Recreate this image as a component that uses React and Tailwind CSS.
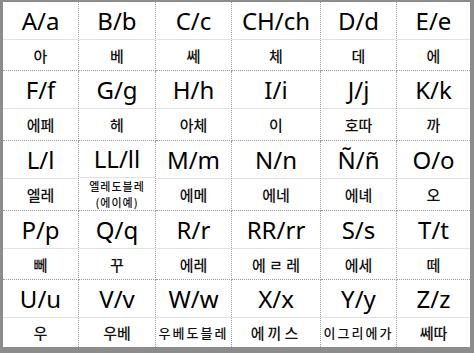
import React from 'react';

const rows = [
  [
    { l: 'A/a', k: '아' },
    { l: 'B/b', k: '베' },
    { l: 'C/c', k: '쎄' },
    { l: 'CH/ch', k: '체' },
    { l: 'D/d', k: '데' },
    { l: 'E/e', k: '에' },
  ],
  [
    { l: 'F/f', k: '에페' },
    { l: 'G/g', k: '헤' },
    { l: 'H/h', k: '아체' },
    { l: 'I/i', k: '이' },
    { l: 'J/j', k: '호따' },
    { l: 'K/k', k: '까' },
  ],
  [
    { l: 'L/l', k: '엘레' },
    { l: 'LL/ll', k: '엘레도블레', k2: '(에이예)' },
    { l: 'M/m', k: '에메' },
    { l: 'N/n', k: '에네' },
    { l: 'Ñ/ñ', k: '에녜' },
    { l: 'O/o', k: '오' },
  ],
  [
    { l: 'P/p', k: '뻬' },
    { l: 'Q/q', k: '꾸' },
    { l: 'R/r', k: '에레' },
    { l: 'RR/rr', k: '에 ㄹ 레' },
    { l: 'S/s', k: '에세' },
    { l: 'T/t', k: '떼' },
  ],
  [
    { l: 'U/u', k: '우' },
    { l: 'V/v', k: '우베' },
    { l: 'W/w', k: '우베도블레', small: true },
    { l: 'X/x', k: '에끼스', wide: true },
    { l: 'Y/y', k: '이그리에가', small: true },
    { l: 'Z/z', k: '쎄따' },
  ],
];

const rowHeights = ['h-[69px]', 'h-[70px]', 'h-[70px]', 'h-[69px]', 'h-[67px]'];
const colWidths = ['w-[76px]', 'w-[77px]', 'w-[76px]', 'w-[89px]', 'w-[76px]', 'w-[73px]'];

export default function App() {
  return (
    <div className="w-[474px] h-[353px] bg-white border-[#8c8c8c] border-l-[3px] border-t-[2px] border-r-[4px] border-b-[6px] flex flex-col">
      {rows.map((row, ri) => (
        <div key={ri} className={`flex ${rowHeights[ri]}`}>
          {row.map((c, ci) => (
            <div
              key={ci}
              className={`${colWidths[ci]} flex flex-col border-[#9a9a9a] border-dotted ${ci < 5 ? 'border-r' : ''} ${ri < 4 ? 'border-b' : ''}`}
            >
              <div className="h-[38px] flex items-center justify-center border-b border-solid border-[#e2e2e2] text-[24px] text-black font-['Noto_Sans',sans-serif] leading-none">
                {c.l}
              </div>
              <div className="flex-1 flex flex-col items-center justify-center text-[#111] font-['Noto_Sans_CJK_KR',sans-serif] font-medium">
                {c.k2 ? (
                  <p className="text-[11px] leading-[16px] tracking-[1px] text-center">
                    {c.k}
                    <br />
                    {c.k2}
                  </p>
                ) : c.small ? (
                  <span className="text-[13px] leading-none tracking-[2px]">{c.k}</span>
                ) : (
                  <span className={`text-[15px] leading-none ${c.wide ? 'tracking-[3px]' : ''}`}>{c.k}</span>
                )}
              </div>
            </div>
          ))}
        </div>
      ))}
    </div>
  );
}
